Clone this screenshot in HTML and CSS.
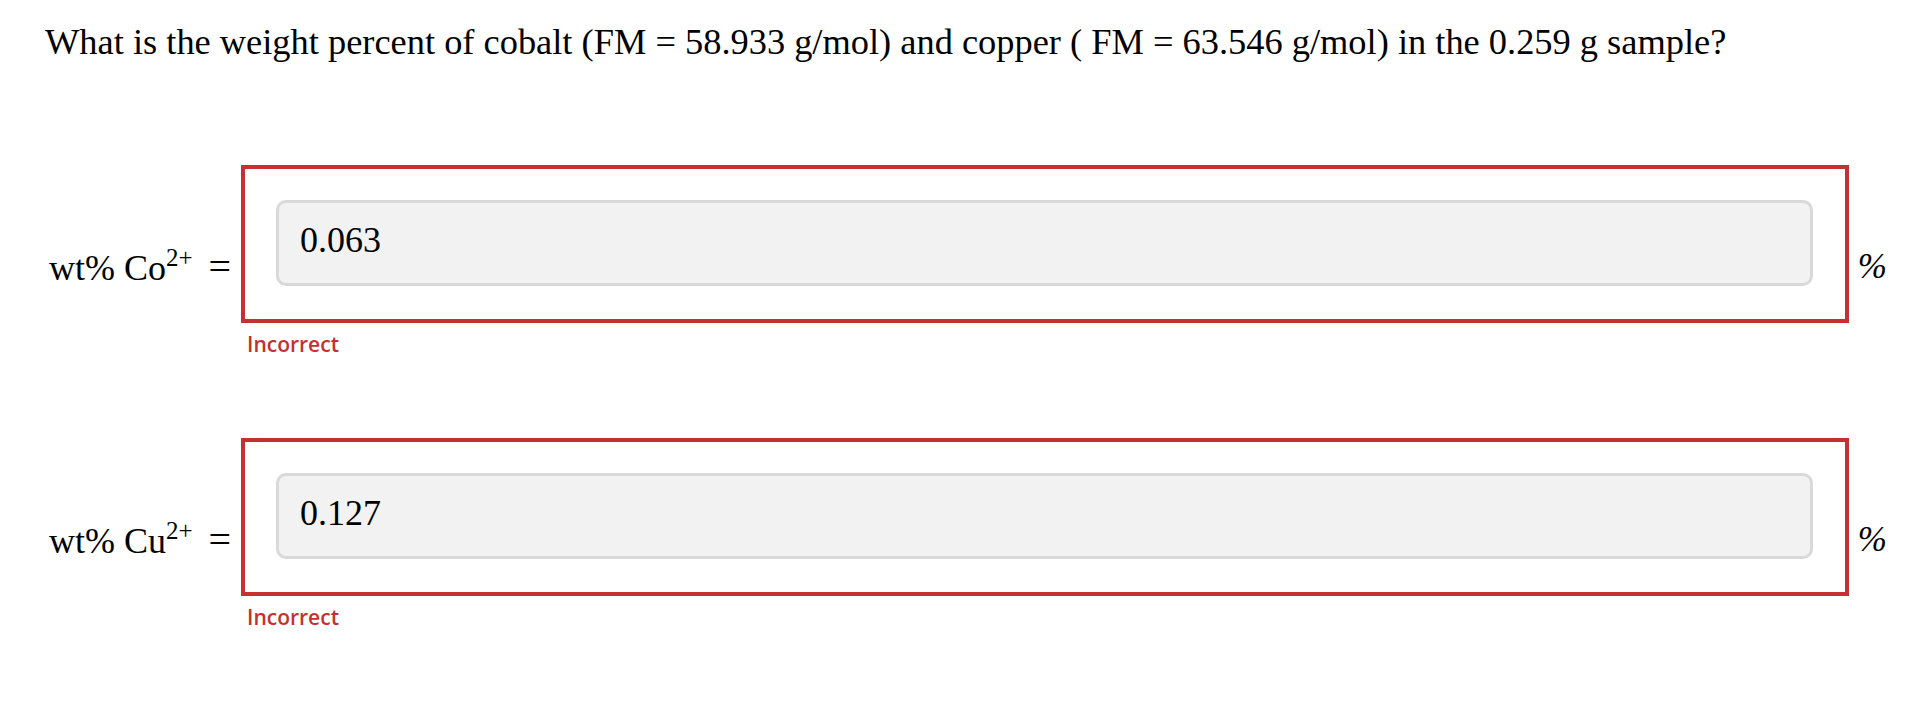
FILE: index.html
```html
<!DOCTYPE html>
<html>
<head>
<meta charset="utf-8">
<link rel="stylesheet" href="styles.css">
</head>
<body>
<div class="page">
  <p class="question">What is the weight percent of cobalt (FM = 58.933 g/mol) and copper ( FM = 63.546 g/mol) in the 0.259 g sample?</p>

  <div class="part">
    <div class="row">
      <div class="label"><span class="lbl">wt% Co<sup class="sup">2+</sup></span><span class="eq">=</span></div>
      <div class="answer-box">
        <input class="answer" type="text" value="0.063" readonly>
      </div>
      <div class="unit">%</div>
    </div>
    <div class="feedback">Incorrect</div>
  </div>

  <div class="part">
    <div class="row">
      <div class="label"><span class="lbl">wt% Cu<sup class="sup">2+</sup></span><span class="eq">=</span></div>
      <div class="answer-box">
        <input class="answer" type="text" value="0.127" readonly>
      </div>
      <div class="unit">%</div>
    </div>
    <div class="feedback">Incorrect</div>
  </div>
</div>
</body>
</html>
```

FILE: styles.css
```css
html, body {
  margin: 0;
  padding: 0;
  background: #ffffff;
}

.page {
  width: 1910px;
  box-sizing: border-box;
  padding: 22px 23px 0 45px;
  font-family: "Liberation Serif", "Times New Roman", serif;
  color: #000;
}

.question {
  margin: 0;
  font-size: 36.4px;
  line-height: 1.15;
  white-space: nowrap;
}

.part {
  margin-top: 101px;
}

.part + .part {
  margin-top: 80px;
}

.row {
  display: flex;
  align-items: flex-start;
}

.label {
  width: 192px;
  margin-left: 4px;
  margin-top: 82px;
  display: flex;
  justify-content: space-between;
  align-items: baseline;
  font-size: 36px;
  line-height: 40px;
  padding-right: 10px;
  box-sizing: border-box;
}

.lbl {
  white-space: nowrap;
}

.sup {
  font-size: 25px;
  vertical-align: 0;
  position: relative;
  top: -14px;
  line-height: 0;
}

.eq {
  font-size: 40px;
  line-height: 40px;
}

.answer-box {
  flex: 1;
  border: 4px solid #c53131;
  padding: 31px 32px 33px 31px;
}

.answer {
  display: block;
  width: 100%;
  box-sizing: border-box;
  height: 86px;
  margin: 0;
  border: 3px solid #d9d9d9;
  border-radius: 10px;
  background: #f2f2f2;
  padding: 0 0 6px 21px;
  font-family: "Liberation Serif", "Times New Roman", serif;
  font-size: 36px;
  color: #000;
  outline: none;
}

.unit {
  margin-left: 9px;
  margin-top: 82px;
  font-size: 35px;
  line-height: 40px;
  font-style: italic;
}

.feedback {
  margin-left: 200px;
  margin-top: 7px;
  padding-left: 2px;
  font-family: "Open Sans", "Noto Sans", sans-serif;
  font-weight: 600;
  font-size: 21px;
  color: #c53131;
}
```
